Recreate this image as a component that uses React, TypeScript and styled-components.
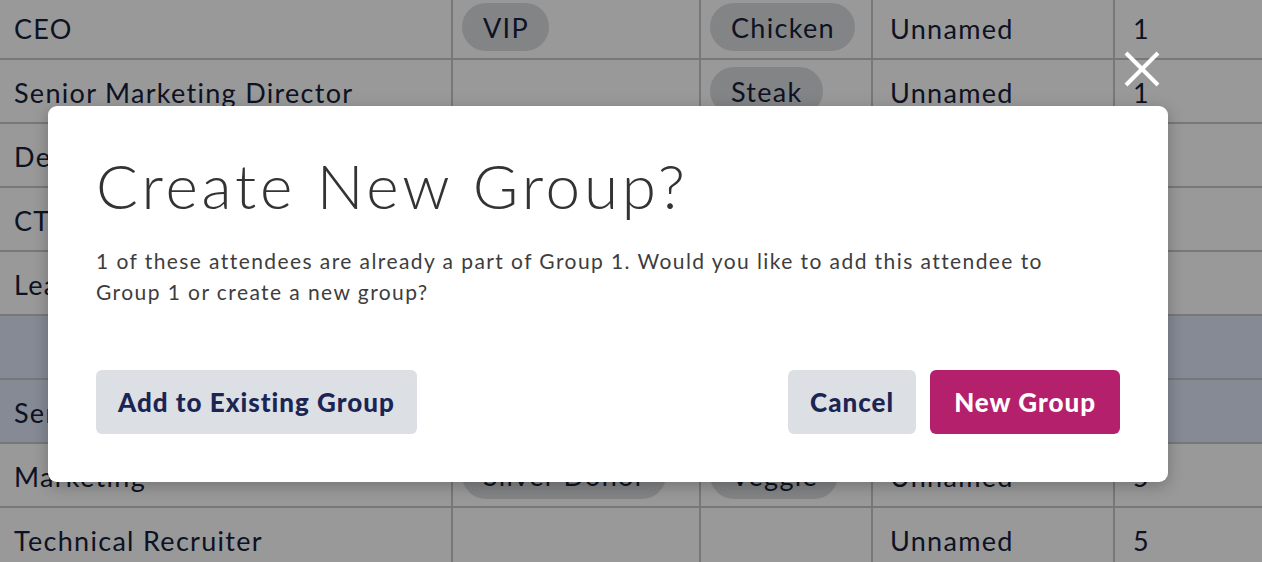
import styled, { createGlobalStyle } from 'styled-components';

const GlobalStyle = createGlobalStyle`
  html, body {
    margin: 0;
    padding: 0;
    overflow: hidden;
    background: #ffffff;
    font-family: Lato, 'Noto Sans', sans-serif;
  }
`;

type Row = {
  title: string;
  tier?: string;
  meal?: string;
  group?: string;
  table?: string;
  highlight?: boolean;
};

const rows: Row[] = [
  { title: 'CEO', tier: 'VIP', meal: 'Chicken', group: 'Unnamed', table: '1' },
  { title: 'Senior Marketing Director', meal: 'Steak', group: 'Unnamed', table: '1' },
  { title: 'Designer', tier: 'VIP', meal: 'Fish', group: 'Unnamed', table: '2' },
  { title: 'CTO', meal: 'Chicken', group: 'Unnamed', table: '2' },
  { title: 'Lead Engineer', tier: 'Speaker', group: 'Unnamed', table: '3' },
  { title: '', highlight: true },
  { title: 'Senior Developer', meal: 'Steak', group: 'Unnamed', table: '4', highlight: true },
  { title: 'Marketing', tier: 'Silver Donor', meal: 'Veggie', group: 'Unnamed', table: '5' },
  { title: 'Technical Recruiter', group: 'Unnamed', table: '5' },
];

const Page = styled.div`
  position: relative;
  width: 1262px;
  height: 562px;
  overflow: hidden;
`;

const Table = styled.div`
  margin-top: -4px;
  display: flex;
  flex-direction: column;
`;

const TableRow = styled.div<{ $highlight?: boolean }>`
  display: grid;
  grid-template-columns: 453px 248px 172px 242px 1fr;
  height: 62px;
  border-bottom: 2px solid #c8c8c8;
  background: ${(p) => (p.$highlight ? '#dee6f8' : '#ffffff')};
`;

const Cell = styled.div<{ $pad?: number }>`
  display: flex;
  align-items: center;
  padding-left: ${(p) => p.$pad ?? 16}px;
  padding-top: 2px;
  border-right: 2px solid #c8c8c8;
  font-size: 27px;
  letter-spacing: 1.3px;
  color: #16213a;
  white-space: nowrap;
  overflow: hidden;
  &:last-child {
    border-right: none;
  }
`;

const Pill = styled.span`
  display: inline-flex;
  align-items: center;
  height: 48px;
  margin-top: -2px;
  padding: 0 20px 0 21px;
  border-radius: 24px;
  background: #dadcdf;
  color: #16213a;
  font-size: 27px;
  letter-spacing: 1.3px;
`;

const Overlay = styled.div`
  position: absolute;
  inset: 0;
  background: rgba(0, 0, 0, 0.4);
`;

const CloseButton = styled.button`
  position: absolute;
  top: 51px;
  left: 1124px;
  width: 36px;
  height: 36px;
  padding: 0;
  border: none;
  background: transparent;
  cursor: pointer;
  display: flex;
`;

const Modal = styled.div`
  position: absolute;
  top: 106px;
  left: 48px;
  width: 1120px;
  height: 376px;
  box-sizing: border-box;
  padding: 43px 48px 48px 48px;
  background: #ffffff;
  border-radius: 9px;
  box-shadow: 0 4px 16px rgba(0, 0, 0, 0.25);
  display: flex;
  flex-direction: column;
`;

const Title = styled.h1`
  margin: 0;
  font-family: Lato, 'Noto Sans', sans-serif;
  font-weight: 300;
  font-size: 62px;
  line-height: 72px;
  color: #333333;
  letter-spacing: 3.8px;
`;

const Message = styled.p`
  margin: 24px 0 0;
  max-width: 975px;
  font-size: 21px;
  line-height: 31px;
  font-weight: 400;
  letter-spacing: 1.42px;
  color: #3d3d3d;
`;

const Actions = styled.div`
  margin-top: auto;
  display: flex;
  align-items: center;
  gap: 14px;
`;

const Spacer = styled.div`
  flex: 1;
`;

const Button = styled.button<{ $primary?: boolean }>`
  height: 64px;
  padding: 0 ${(p) => (p.$primary ? 24 : 22)}px;
  border: none;
  border-radius: 6px;
  font-family: Lato, 'Noto Sans', sans-serif;
  font-weight: 900;
  font-size: 26px;
  letter-spacing: 1px;
  cursor: pointer;
  background: ${(p) => (p.$primary ? '#b5206d' : '#dcdfe3')};
  color: ${(p) => (p.$primary ? '#ffffff' : '#1b2553')};
`;

export default function App() {
  return (
    <Page>
      <GlobalStyle />
      <Table>
        {rows.map((r, i) => (
          <TableRow key={i} $highlight={r.highlight}>
            <Cell $pad={14}>{r.title}</Cell>
            <Cell $pad={9}>{r.tier && <Pill>{r.tier}</Pill>}</Cell>
            <Cell $pad={9}>{r.meal && <Pill>{r.meal}</Pill>}</Cell>
            <Cell $pad={17}>{r.group}</Cell>
            <Cell $pad={18}>{r.table}</Cell>
          </TableRow>
        ))}
      </Table>
      <Overlay />
      <CloseButton aria-label="Close">
        <svg width="36" height="36" viewBox="0 0 36 36">
          <path d="M2 2 L34 34 M34 2 L2 34" stroke="#ffffff" strokeWidth="4" />
        </svg>
      </CloseButton>
      <Modal role="dialog">
        <Title>Create New Group?</Title>
        <Message>
          1 of these attendees are already a part of Group 1. Would you like to add this attendee to Group 1 or
          create a new group?
        </Message>
        <Actions>
          <Button>Add to Existing Group</Button>
          <Spacer />
          <Button>Cancel</Button>
          <Button $primary>New Group</Button>
        </Actions>
      </Modal>
    </Page>
  );
}
